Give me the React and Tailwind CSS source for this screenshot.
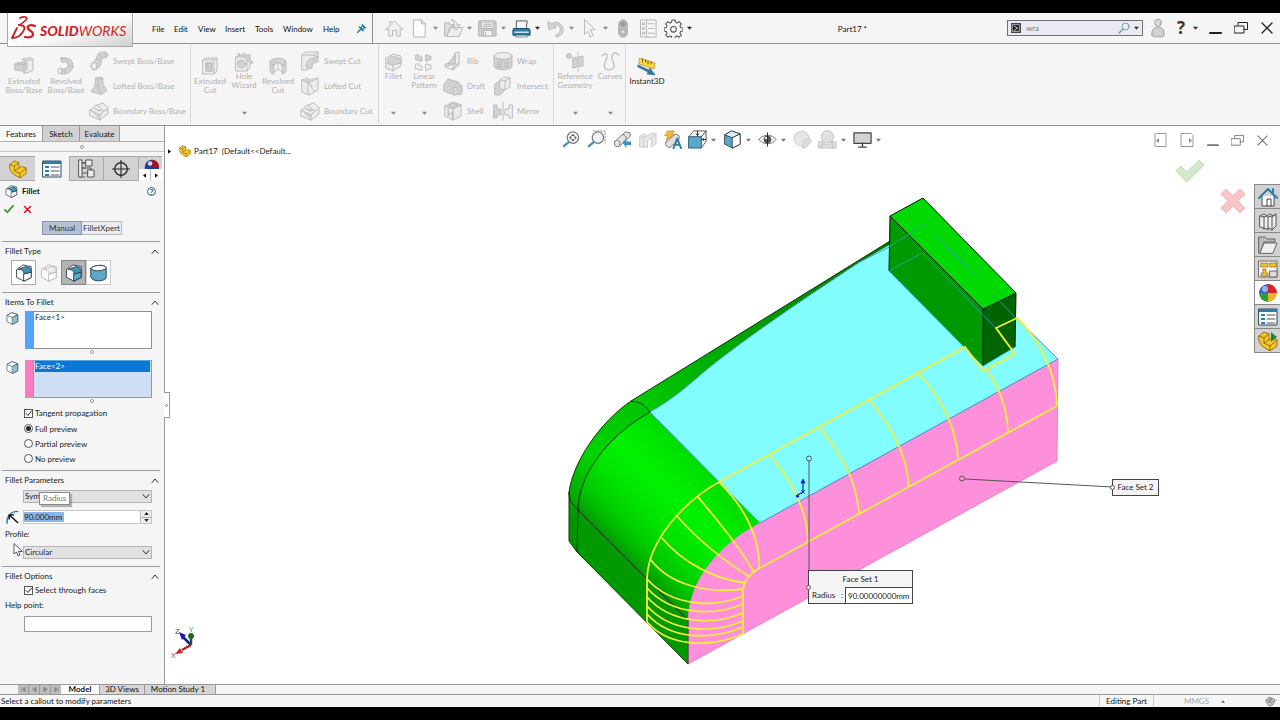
import { useState } from "react";
import clsx from "clsx";

function Svg({ box = "0 0 20 20", className = "size-5", children }) {
    return (
        <svg viewBox={box} className={clsx("shrink-0", className)} fill="none" strokeLinejoin="round" strokeLinecap="round" aria-hidden="true">
            {children}
        </svg>
    );
}

function Caret({ className = "text-[#777]" }) {
    return (
        <Svg box="0 0 6 4" className={clsx("h-1 w-[5px]", className)}>
            <path d="M0 .5h6L3 4z" fill="currentColor" />
        </Svg>
    );
}

/* ---------- ribbon icons (greyed out) ---------- */

const G = "#bdbdbd";
const L = "#ececec";
const D = "#d2d2d2";

const ribbonIcons = {
    extrude: (
        <g stroke={G}>
            <path d="M9 3l8-1.500 2 2v11l-8 3-2-1.500z" fill={L} />
            <path d="M9 3l2 1.500v13M11 4.500l8-1" />
            <path d="M1 8l3-1.500 9 .5v6l-3 2-9-1z" fill={D} />
            <path d="M1 8l9 .5v6.500M10 8.500L13 7" />
        </g>
    ),
    revolve: (
        <g stroke={G}>
            <path d="M5 2c8-2 13 4 12 9s-8 9-14 6l1-5c4 2 7 1 8-2s-2-5-6-4z" fill={D} />
            <path d="M5 2c4 1 6 2 7 6M17 11l-5-1M9 18l0-5" />
            <ellipse cx="4" cy="15" rx="2" ry="3" fill={L} />
        </g>
    ),
    sweep: (
        <g stroke={G}>
            <path d="M2 15c0-4 4-4 5-7s2-7 7-7c3 0 5 1 5 3s-2 3-4 3c-3 0-2 3-3 6s-4 6-7 6c-2 0-3-2-3-4z" fill={D} />
            <ellipse cx="5" cy="15" rx="3" ry="3.500" fill={L} />
            <path d="M16 1l1 5M9 3l4 3M7 8l5 2" />
        </g>
    ),
    loft: (
        <g stroke={G}>
            <path d="M7 2l5-1 2 1.500v6l4 6-6 4-10-3 4-6z" fill={D} />
            <path d="M7 2l2 1.500 5-1M9 3.500v6l3 9M6 9.500l3 0" />
        </g>
    ),
    boundary: (
        <g stroke={G}>
            <path d="M1 9c3-1 4-5 7-5s3-2 6-2l5 5v6l-8 6-10-4z" fill={L} />
            <path d="M1 9l10 5v5M11 14c2-1 2-3 4-4s3-1 4-3M8 4l4 4M5 7l5 3 4-1" fill={D} />
        </g>
    ),
    cutExtrude: (
        <g stroke={G}>
            <path d="M3 4l3-2h11v13l-3 3H3z" fill={L} />
            <path d="M3 4h11v14M14 4l3-2" />
            <path d="M6 7h6v8H6z" fill={D} strokeWidth="1.500" />
            <path d="M8 7v5h4" />
        </g>
    ),
    hole: (
        <g stroke={G}>
            <path d="M2 5l4-2h10v12l-3 4H2z" fill={L} />
            <path d="M2 5h11v14M13 5l3-2" />
            <circle cx="7.500" cy="12" r="4" fill={D} />
            <path d="M10 1l9 9-2 2-9-9z" fill={D} />
            <path d="M5 1l1 3M3 2l2 1" />
        </g>
    ),
    cutRevolve: (
        <g stroke={G}>
            <path d="M2 6c0-5 16-5 16 0v9c0 2-2 3-4 3V9l-4-3-4 3v9c-2 0-4-1-4-3z" fill={D} />
            <path d="M2 6c0 2 2 3 4 3M18 6c0 2-2 3-4 3M10 6v7l-4 3M10 13l4 3" />
        </g>
    ),
    cutSweep: (
        <g stroke={G}>
            <path d="M2 4l3-3h13v6l-2 2c-5 0-7 3-7 7l-2 3H2z" fill={L} />
            <path d="M2 4h13v5M15 4l3-3" />
            <path d="M6 16c0-6 3-9 9-9l3-2v6c-4 0-6 2-6 6l-2 1z" fill={D} />
        </g>
    ),
    cutLoft: (
        <g stroke={G}>
            <path d="M2 4l6-2 1 2 9-2v12l-9 5-7-3z" fill={L} />
            <path d="M2 4l6 3 10-5M8 7v11M8 7c5 1 3 7 6 8" fill={D} />
        </g>
    ),
    fillet: (
        <g stroke={G}>
            <path d="M2 6l7-4 8 2v10l-8 5-7-3z" fill={L} />
            <path d="M4 8c1-3 4-4 8-3l5 2v4l-8 2-5-1z" fill={D} />
            <path d="M9 13v6" />
        </g>
    ),
    pattern: (
        <g stroke={G}>
            <path d="M2 3h3v2h3v4H5v-1H2zM12 3h2v1h3v4h-3v1h-2z" fill={D} />
            <path d="M2 12h3v2h3v4H5v-1H2zM12 12h2v1h3v4h-3v1h-2z" />
        </g>
    ),
    rib: (
        <g stroke={G}>
            <path d="M12 2l4-1v13l-6 5-8-3 0-3 7-1z" fill={L} />
            <path d="M12 2v11l-9 2M12 4c-1 4-3 6-7 8l7 1zM10 19v-3l6-4" fill={D} />
        </g>
    ),
    draft: (
        <g stroke={G}>
            <path d="M1 8l4-5 10 3 4 4v8l-8 1-10-4z" fill={D} />
            <path d="M11 19l0-7 4-6M11 12l8-2" fill={L} />
        </g>
    ),
    shell: (
        <g stroke={G}>
            <path d="M2 5l8-4 8 3v11l-8 4-8-4z" fill={L} />
            <path d="M2 5l8 3 8-4M10 8v11M5 7v8l5-4v7M6 4l4-2 5 2-5 2z" fill={D} />
        </g>
    ),
    wrap: (
        <g stroke={G}>
            <ellipse cx="10" cy="5" rx="9" ry="3.500" fill={L} />
            <path d="M1 5v10c0 5 18 5 18 0V5c0 4.500-18 4.500-18 0z" fill={D} />
            <path d="M9 11H5v5h4M5 13.500h3M12 11v5l3-.5v-4.500" strokeWidth="1.500" />
        </g>
    ),
    intersect: (
        <g stroke={G}>
            <path d="M2 8l5-3h4v10l-4 4H2z" fill={D} />
            <path d="M7 4l4-3 6 1v9l-5 3-5-1z" fill={L} />
            <path d="M7 4l5 1v9M12 5l5-3" />
        </g>
    ),
    mirror: (
        <g stroke={G}>
            <path d="M1 4h3v4h4v6H4v3H1z" fill={D} />
            <path d="M19 4h-3v4h-4v6h4v3h3z" fill={L} />
            <path d="M10 1v18" />
        </g>
    ),
    reference: (
        <g stroke={G}>
            <circle cx="4" cy="4" r="2.500" fill={D} />
            <path d="M8 6l10-2v10L8 16z" fill={D} />
            <path d="M13 0v3M13 7v6M13 17v3" />
        </g>
    ),
    curves: <path d="M2 4c2-3 6-3 5 1S2 15 6 17s9 0 8-4-4-8-1-11 4 0 6 1" stroke={G} strokeWidth="1.300" />,
    instant: (
        <g>
            <path d="M3 2l15 5-1 6L2 8z" fill="#ffd93b" stroke="#a08020" strokeWidth=".6" />
            <path d="M5.500 3v3M8.500 4v2M11 5v3M14 6v2" stroke="#5c4a10" strokeWidth=".9" />
            <path d="M1 9l11 5 1-2 5 7-8-1 1-2-10-5z" fill="#2c7fa3" stroke="#1b5875" strokeWidth=".5" />
        </g>
    ),
};

function BigTool({ icon, label, width, drop, active }) {
    return (
        <button className={clsx("flex h-full flex-col items-center leading-[9px]", width, drop ? "pt-2" : "pt-3", active ? "text-[#222]" : "text-[#b0b0b0]")}>
            <Svg>{ribbonIcons[icon]}</Svg>
            <span className={clsx("whitespace-pre text-center", !drop && "pt-px")}>{label}</span>
            {drop && <Caret className="mt-auto mb-2 text-[#888]" />}
        </button>
    );
}

function ToolStack({ items }) {
    return (
        <div className="flex flex-col pt-1">
            {items.map(([icon, label]) => (
                <button key={label} className="flex h-[25px] items-center gap-1 whitespace-nowrap text-[#b0b0b0]">
                    <Svg>{ribbonIcons[icon]}</Svg>
                    {label}
                </button>
            ))}
        </div>
    );
}

function Ribbon() {
    return (
        <div className="flex h-[82px] shrink-0 border-b border-[#8f8f8f] bg-[#f5f5f5] pb-[2px]">
            <div className="flex w-[191px] border-r border-[#d8d8d8] pl-[3px]">
                <BigTool icon="extrude" label={"Extruded\nBoss/Base"} width="w-[42px]" />
                <BigTool icon="revolve" label={"Revolved\nBoss/Base"} width="w-[42px]" />
                <div className="pl-[2px]">
                    <ToolStack items={[["sweep", "Swept Boss/Base"], ["loft", "Lofted Boss/Base"], ["boundary", "Boundary Boss/Base"]]} />
                </div>
            </div>
            <div className="flex w-[188px] border-r border-[#d8d8d8] pl-[2px]">
                <BigTool icon="cutExtrude" label={"Extruded\nCut"} width="w-[34px]" />
                <BigTool icon="hole" label={"Hole\nWizard"} width="w-[34px]" drop />
                <BigTool icon="cutRevolve" label={"Revolved\nCut"} width="w-[34px]" />
                <div className="pl-[5px]">
                    <ToolStack items={[["cutSweep", "Swept Cut"], ["cutLoft", "Lofted Cut"], ["boundary", "Boundary Cut"]]} />
                </div>
            </div>
            <div className="flex w-[175px] border-r border-[#d8d8d8]">
                <BigTool icon="fillet" label="Fillet" width="w-[29px]" drop />
                <BigTool icon="pattern" label={"Linear\nPattern"} width="w-[32px]" drop />
                <div className="flex w-[53px] pl-[3px]">
                    <ToolStack items={[["rib", "Rib"], ["draft", "Draft"], ["shell", "Shell"]]} />
                </div>
                <ToolStack items={[["wrap", "Wrap"], ["intersect", "Intersect"], ["mirror", "Mirror"]]} />
            </div>
            <div className="flex w-[72px] border-r border-[#d8d8d8]">
                <BigTool icon="reference" label={"Reference\nGeometry"} width="w-[42px]" drop />
                <BigTool icon="curves" label="Curves" width="w-[28px]" drop />
            </div>
            <BigTool icon="instant" label="Instant3D" width="w-[42px]" active />
        </div>
    );
}

/* ---------- title bar ---------- */

const quickIcons = {
    home: <path d="M1 11l9-9 9 9h-3v7h-4v-6H8v6H4v-7zM5 5V3h2" stroke="#b5b5b5" fill="#f0f0f0" />,
    file: <path d="M4 1h8l4 4v14H4zM12 1v4h4" stroke="#b5b5b5" fill="#fbfbfb" />,
    open: (
        <g stroke="#b5b5b5">
            <path d="M1 4h5l1 2h8v3H6l-3 9H1z" fill="#ddd" />
            <path d="M3 18l4-9h13l-4 9zM8 1c4 0 6 3 6 6l3-1-4 6-5-4 3-.5C11 5 10 3 8 1z" fill="#eee" />
        </g>
    ),
    save: (
        <g stroke="#b0b0b0">
            <path d="M1 2h17l1 1v15H1z" fill="#cfcfcf" />
            <path d="M4 2h12v8H4zM6 12h9v6H6z" fill="#f2f2f2" />
            <path d="M6 4h8M6 6h8M6 8h8M8 14v3" />
        </g>
    ),
    print: (
        <g>
            <path d="M5 2h11l-1 8H5z" fill="#f3f5f7" stroke="#555" />
            <path d="M2 10h16l1 2v5H1v-5z" fill="#2b7ea6" stroke="#174a63" />
            <path d="M3 14h14" stroke="#bfe4f5" strokeWidth="1.500" />
            <path d="M4 17h12v2H4z" fill="#e8eef0" stroke="#4d6a77" strokeWidth=".7" />
        </g>
    ),
    undo: <path d="M2 3l1 8 8-2-3-2c4-2 7 0 7 4s-3 5-5 6l1 2c4-1 8-4 7-9S11 1 6 5z" fill="#d5d5d5" stroke="#b5b5b5" />,
    pointer: <path d="M5 1l11 10-5 .5 3 6-3 1.500-3-6-3 3z" fill="#f3f3f3" stroke="#b5b5b5" />,
    traffic: (
        <g stroke="#a5a5a5">
            <rect x="5" y="1" width="9" height="18" rx="4.500" fill="#bbb" />
            <circle cx="9.500" cy="5.500" r="2.500" fill="#999" />
            <circle cx="9.500" cy="13.500" r="2.500" fill="#ddd" />
        </g>
    ),
    list: (
        <g stroke="#b5b5b5">
            <path d="M2 1h16v18H2zM8 1v18" fill="#f6f6f6" />
            <path d="M4 4h2v2H4zM4 9h2v2H4zM4 14h2v2H4zM10 5h6M10 10h6M10 15h6" />
        </g>
    ),
    gear: (
        <g stroke="#555" strokeWidth="1.100">
            <path d="M8.400 1h3.200l.5 2.500 1.700.7 2.100-1.400 2.300 2.300-1.400 2.100.7 1.700 2.500.5v3.200l-2.500.5-.7 1.700 1.400 2.100-2.300 2.300-2.100-1.400-1.700.7-.5 2.500H8.400l-.5-2.500-1.700-.7-2.100 1.400-2.300-2.300 1.400-2.100-.7-1.700L0 12.600V9.400l2.500-.5.7-1.700-1.400-2.100 2.300-2.300 2.100 1.400 1.700-.7z" fill="#f8f8f8" />
            <circle cx="10" cy="10.800" r="3" />
        </g>
    ),
};

const quickTools = [
    ["home", "Home", 0],
    ["file", "New", 1],
    ["open", "Open", 1],
    ["save", "Save", 1],
    ["print", "Print", 2],
    ["undo", "Undo", 1],
    ["pointer", "Select", 1],
    ["traffic", "Rebuild", 0],
    ["list", "File Properties", 0],
    ["gear", "Options", 2],
];

function Logo() {
    return (
        <div className="z-10 -mb-1 ml-[7px] flex h-[34px] w-[126px] shrink-0 items-center self-start border border-t-0 border-[#a8a8a8] bg-linear-to-br from-white via-white to-[#cfcfcf] pl-[3px]">
            <Svg box="0 0 26 26" className="-mt-[5px] size-[26px]">
                <path d="M9 4C13 2 18 3 15 6C13 8 11 10 8 11" stroke="#cf1f25" strokeWidth="1.700" />
                <path d="M8 11C14 11 15 14 11 19C9 22 5 24 1 24L6 14" stroke="#cf1f25" strokeWidth="1.900" />
                <path d="M24 12C19 10 16 12 17 14.500C18 17 22 17 22 20C22 23 18 24 14 23" stroke="#cf1f25" strokeWidth="2.300" />
            </Svg>
            <span className="ml-[3px] pt-[3px] font-[Lato] text-[14px] italic leading-4 text-[#cf1f25]">
                <b className="font-black">SOLID</b>WORKS
            </span>
        </div>
    );
}

function WindowButtons({ className, size, gap }) {
    return (
        <div className={clsx("flex items-center", gap, className)}>
            <button aria-label="Minimize"><Svg box="0 0 14 14" className={size}><path d="M2 12h11" stroke="currentColor" strokeWidth="2" /></Svg></button>
            <button aria-label="Restore">
                <Svg box="0 0 14 14" className={size}>
                    <path d="M4 4V1.500h9.500v7H10" stroke="currentColor" />
                    <path d="M.5 5h9.500v7H.5z" stroke="currentColor" />
                </Svg>
            </button>
            <button aria-label="Close"><Svg box="0 0 14 14" className={size}><path d="M2 2l10 10M12 2L2 12" stroke="currentColor" strokeWidth="1.300" /></Svg></button>
        </div>
    );
}

function TitleBar() {
    return (
        <header className="flex h-[31px] shrink-0 items-center border-b border-[#8f8f8f] bg-[#f5f5f5]">
            <Logo />
            <nav className="ml-[19px] flex items-center pt-[2px] text-[#111]">
                {[["File", "w-[22px]"], ["Edit", "w-6"], ["View", "w-[27px]"], ["Insert", "w-[30px]"], ["Tools", "w-[28px]"], ["Window", "w-[40px]"], ["Help", "w-[34px]"]].map(([m, w]) => (
                    <button key={m} className={clsx("text-left", w)}>{m}</button>
                ))}
            </nav>
            <button aria-label="Pin menu" className="flex h-full w-4 items-center justify-start border-r border-[#8f8f8f]">
                <Svg box="0 0 12 12" className="size-[9px]"><path d="M1 11l4-4M3 4l5 5M5 5l3-3 2 3-3 3zM7 1l4 4" stroke="#2b7ea6" strokeWidth="2" /></Svg>
            </button>
            <div className="ml-3 flex items-center">
                {quickTools.map(([icon, name, drop]) => (
                    <button key={name} aria-label={name} className={clsx("flex items-center gap-1", drop ? "w-[34px]" : "w-[25px]")}>
                        <Svg className="size-[19px]">{quickIcons[icon]}</Svg>
                        {drop > 0 && <Caret className={drop === 2 ? "text-[#222]" : "text-[#888]"} />}
                    </button>
                ))}
            </div>
            <div className="flex-1 pt-[2px] text-center">Part17 *</div>
            <label className="flex h-4 w-[136px] items-center border border-[#6d7078] bg-[#e9ebf1] px-[3px]">
                <Svg box="0 0 12 12" className="size-[10px]">
                    <path d="M0 0h12v12H0z" fill="#444" />
                    <path d="M2 2h8v8H2z" fill="#111" stroke="#ccc" />
                    <path d="M4 4l4 2-4 3" stroke="#fff" />
                </Svg>
                <input aria-label="Search commands" defaultValue="wra" className="ml-[5px] min-w-0 flex-1 bg-transparent text-[#777] outline-none" />
                <Svg box="0 0 12 12" className="size-3"><circle cx="7.500" cy="4.500" r="3.500" stroke="#7a97b5" /><path d="M5 7l-4 4" stroke="#7a97b5" strokeWidth="1.500" /></Svg>
                <Caret className="ml-1 text-[#333]" />
            </label>
            <button aria-label="Account" className="ml-2">
                <Svg box="0 0 16 22" className="h-5 w-[14px]">
                    <circle cx="8" cy="5" r="4" fill="#d8d8d8" stroke="#999" />
                    <path d="M1 18c0-5 2-8 7-8s7 3 7 8c0 2-1 3-2 3H3c-1 0-2-1-2-3z" fill="#d0d0d0" stroke="#999" />
                </Svg>
            </button>
            <button aria-label="Help" className="ml-3 flex items-center gap-2 font-['Open_Sans'] text-[17px] leading-5 font-bold text-[#333]">?<Caret className="text-[#333]" /></button>
            <WindowButtons className="mr-[6px] ml-[10px] text-[#222]" size="size-[14px]" gap="gap-3" />
        </header>
    );
}

/* ---------- property manager ---------- */

function Cube({ top = "#fff", left = "#fff", right = "#8cc3da", className }) {
    return (
        <Svg className={className}>
            <path d="M2 5l7-4 9 3v11l-8 4-8-4z" fill={left} stroke="#3b4a52" />
            <path d="M10 8l8-4v11l-8 4z" fill={right} stroke="#3b4a52" />
            <path d="M2 5l7-4 9 3-8 4z" fill={top} stroke="#3b4a52" />
        </Svg>
    );
}

// cube with its front top edge rounded off
function FilletCube({ front = "#fff", band = "#3f93b8", line = "#2c3e48", className }) {
    return (
        <Svg className={className}>
            <path d="M2 6l7-5 9 2v12l-8 4-8-4z" fill="#fff" stroke={line} />
            <path d="M10 11l8-2v6l-8 4z" fill={front} stroke={line} />
            <path d="M4 6c4 0 6 2 6 5l8-2c0-4-2-6-6-6z" fill={band} stroke={line} />
        </Svg>
    );
}

function PartIcon({ className, play }) {
    return (
        <Svg className={className}>
            <path d="M1 5l5-4 5 2v6l3-2 5 2v6l-7 5-8-5-3-5z" fill="#f5c731" stroke="#94700c" />
            <path d="M1 5l5 2 5-4M6 7v5l6 3 7-6M12 15v5M6 12l5-3" stroke="#94700c" />
            {play && <path d="M13 1l6 5-6 5z" fill="#1f8a2c" />}
        </Svg>
    );
}

function ListIcon({ className }) {
    return (
        <Svg className={className}>
            <path d="M1 2h18v16H1z" fill="#fff" stroke="#234c60" />
            <path d="M1 2h18v3H1z" fill="#2b7ea6" />
            <path d="M3 7h4v2H3zM3 11h4v2H3zM3 15h4v2H3z" fill="#2b7ea6" />
            <path d="M9 8h8M9 12h8M9 16h8" stroke="#555" />
        </Svg>
    );
}

function Chevron({ up, className }) {
    return (
        <Svg box="0 0 8 5" className={clsx("h-[5px] w-2", className)}>
            <path d={up ? "M1 4.500L4 1l3 3.500" : "M1 .5L4 4 7 .5"} stroke="#333" />
        </Svg>
    );
}

function Section({ title, children }) {
    return (
        <section className="mr-1 ml-[2px] border-t border-[#9b9b9b] pr-2 pl-[3px]">
            <button className="flex h-[18px] w-full items-center text-[#222]">
                {title}
                <Chevron up className="-mr-[7px] ml-auto" />
            </button>
            {children}
        </section>
    );
}

function SelectionList({ label, value, bar, selected }) {
    return (
        <div className="flex">
            <Cube className="mt-px mr-[6px] ml-px size-[13px]" />
            <div className={clsx("w-2 shrink-0", bar)} />
            <ul role="listbox" aria-label={label} className={clsx("h-[38px] flex-1 border px-px", selected ? "border-[#5aa9e6] bg-[#cfe0f6]" : "border-[#8f8f9a] bg-white")}>
                <li role="option" aria-selected={!!selected} className={clsx("h-[11px] leading-[11px]", selected ? "bg-[#0a78d7] text-white" : "text-[#222]")}>{value}</li>
            </ul>
        </div>
    );
}

function Handle() {
    return <div className="mx-auto size-1 shrink-0 rounded-full border border-[#999] bg-white" />;
}

function Check({ children }) {
    return (
        <label className="flex items-center gap-[2px] text-[#222]">
            <span className="grid size-[9px] shrink-0 place-items-center">
                <input type="checkbox" defaultChecked className="peer col-start-1 row-start-1 size-[9px] appearance-none border border-[#555] bg-white" />
                <Svg box="0 0 9 9" className="pointer-events-none invisible col-start-1 row-start-1 size-[9px] peer-checked:visible"><path d="M2 4.500L4 6.500 7.500 2" stroke="#222" /></Svg>
            </span>
            {children}
        </label>
    );
}

function Combo({ label, options }) {
    return (
        <div className="ml-[18px] grid h-[13px] items-center">
            <select aria-label={label} className="col-start-1 row-start-1 h-[13px] appearance-none border border-[#b5b5b5] bg-[#e1e1e1] pl-px leading-[11px] text-[#222]">
                {options.map((o) => <option key={o}>{o}</option>)}
            </select>
            <Chevron className="pointer-events-none col-start-1 row-start-1 mr-[2px] justify-self-end" />
        </div>
    );
}

function FilletPanel() {
    const [preview, setPreview] = useState("Full preview");

    return (
        <aside className="relative flex w-[165px] shrink-0 flex-col border-r border-[#9b9b9b] bg-[#f5f5f5]">
            <div className="flex h-4 border-b border-[#b0b0b0]">
                <button className="w-[42px] bg-[#f8f8f8]">Features</button>
                <button className="w-[38px] border-x border-[#999] bg-[#d2d2d2]">Sketch</button>
                <button className="w-10 border-r border-[#999] bg-[#d2d2d2]">Evaluate</button>
            </div>
            <div className="flex h-[10px] items-center border-b border-[#c5c5c5]"><Handle /></div>

            <div className="mt-1 mr-[2px] flex h-[25px]">
                <button aria-label="Feature tree" className="grid w-[35px] place-items-center border-y border-[#aaa] bg-[#d2d2d2]"><PartIcon className="size-[18px]" /></button>
                <button aria-label="Properties" className="grid w-[34px] place-items-center"><ListIcon className="size-5" /></button>
                <button aria-label="Configurations" className="grid w-[35px] place-items-center border border-[#aaa] bg-[#d2d2d2]">
                    <Svg>
                        <path d="M3 1v17h5M3 9h5M3 4h5" stroke="#666" />
                        <path d="M2 1h3v17H2zM9 1h6v6H9zM11 11h6v7h-6z" fill="#eee" stroke="#555" />
                        <path d="M5 4h4M5 9h9v2M5 14h6" stroke="#555" />
                    </Svg>
                </button>
                <button aria-label="Dimensions" className="grid w-[35px] place-items-center border-y border-r border-[#aaa] bg-[#d2d2d2]">
                    <Svg className="size-[18px]"><circle cx="10" cy="10" r="7" stroke="#222" strokeWidth="1.400" /><path d="M10 0v20M0 10h20" stroke="#222" strokeWidth="1.200" /></Svg>
                </button>
                <div className="flex flex-1 flex-col border-t border-[#aaa] bg-[#d2d2d2]">
                    <button aria-label="Display" className="grid h-3 items-start justify-items-center overflow-hidden pt-px">
                        <Svg className="size-[18px]"><circle cx="11" cy="10" r="8" fill="#22409a" /><path d="M11 2a8 8 0 0 1 8 8h-8z" fill="#a31621" /><circle cx="9" cy="6" r="2.500" fill="#d5e2ff" /></Svg>
                    </button>
                    <div className="grid flex-1 grid-cols-2 divide-x divide-[#bbb] bg-white text-[#111]">
                        <button aria-label="Previous tab" className="grid place-items-center"><Svg box="0 0 4 6" className="h-[5px] w-[3px]"><path d="M4 0v6L0 3z" fill="currentColor" /></Svg></button>
                        <button aria-label="Next tab" className="grid place-items-center"><Svg box="0 0 4 6" className="h-[5px] w-[3px]"><path d="M0 0v6l4-3z" fill="currentColor" /></Svg></button>
                    </div>
                </div>
            </div>

            <div className="flex h-5 items-center pr-2 pl-[5px]">
                <FilletCube className="size-[13px]" />
                <h1 className="ml-1 font-bold">Fillet</h1>
                <button aria-label="Help" className="ml-auto grid size-[9px] place-items-center rounded-full border border-[#38617a] leading-[8px] font-bold text-[#205a80]">?</button>
            </div>
            <div className="flex h-4 items-center gap-[9px] pl-1">
                <button aria-label="OK"><Svg box="0 0 12 12" className="size-[10px]"><path d="M1 7l3 3 7-8" stroke="#3a9a1f" strokeWidth="2" /></Svg></button>
                <button aria-label="Cancel"><Svg box="0 0 12 12" className="size-[9px]"><path d="M2 2l8 8M10 2l-8 8" stroke="#d2161e" strokeWidth="2" /></Svg></button>
            </div>
            <div className="mx-auto mt-1 mb-[6px] flex h-[14px] text-[#333]">
                <button className="w-10 border border-[#8894a5] bg-[#b4c1d4]">Manual</button>
                <button className="w-10 border border-l-0 border-[#b5b9c0] bg-[#ebedf1]">FilletXpert</button>
            </div>

            <Section title="Fillet Type">
                <div className="mb-[7px] ml-[6px] flex h-[25px]">
                    <button aria-label="Constant size" className="grid w-[25px] place-items-center border border-[#aaa] bg-white"><FilletCube className="size-[18px]" /></button>
                    <button aria-label="Variable size" className="grid w-[25px] place-items-center"><FilletCube band="#eee" line="#b5b5b5" className="size-[18px]" /></button>
                    <button aria-label="Face fillet" className="grid w-[25px] place-items-center border border-[#888] bg-[#b3b3b3]"><FilletCube front="#5ba7c8" className="size-[18px]" /></button>
                    <button aria-label="Full round" className="grid w-[25px] place-items-center border border-[#ccc] bg-white">
                        <Svg className="size-[18px]"><path d="M1 5c2-4 15-5 17-1v11c-2 5-15 5-17 0z" fill="#5ba7c8" stroke="#223c48" /><path d="M1 5c2-4 15-5 17-1-1 4-15 5-17 1z" fill="#fff" stroke="#223c48" /></Svg>
                    </button>
                </div>
            </Section>

            <Section title="Items To Fillet">
                <SelectionList label="Face set 1" value="Face<1>" bar="bg-[#55a4fb]" />
                <div className="h-[11px] pt-px pl-[26px]"><Handle /></div>
                <SelectionList label="Face set 2" value="Face<2>" bar="bg-[#fb7cc0]" selected />
                <div className="h-[7px] pt-px pl-[26px]"><Handle /></div>
                <div className="mb-1 ml-[19px] flex flex-col">
                    <div className="flex h-4"><Check>Tangent propagation</Check></div>
                    {["Full preview", "Partial preview", "No preview"].map((p) => (
                        <label key={p} className="flex h-[15px] items-center gap-[2px] text-[#222]">
                            <input
                                type="radio"
                                name="preview"
                                checked={preview === p}
                                onChange={() => setPreview(p)}
                                className="grid size-[9px] shrink-0 appearance-none place-items-center rounded-full border border-[#555] bg-white checked:after:size-[5px] checked:after:rounded-full checked:after:bg-[#222] checked:after:content-['']"
                            />
                            {p}
                        </label>
                    ))}
                </div>
            </Section>

            <Section title="Fillet Parameters">
                <div className="relative mt-px">
                    <Combo label="Symmetry" options={["Symmetric", "Asymmetric"]} />
                    <div role="tooltip" className="absolute top-[2px] left-[34px] border border-[#888] bg-white px-[3px] leading-[11px] text-[#777] shadow-[2px_2px_1px_#8889]">Radius</div>
                </div>
                <div className="mt-[7px] flex h-[14px] items-center">
                    <Svg className="mr-1 size-[14px]"><path d="M3 19C2 9 8 2 18 2" stroke="#2b7ea6" strokeWidth="2" /><path d="M18 18L7 8M6 13V7h6" stroke="#111" strokeWidth="2" /></Svg>
                    <div className="flex h-full flex-1 items-center border border-[#c5c5c5] bg-white">
                        <input aria-label="Radius" defaultValue="90.000mm" className="w-10 bg-[#86b7e6] leading-[10px] text-[#222] outline-none" />
                        <div className="ml-auto flex h-full w-[11px] flex-col divide-y divide-[#aaa] border-l border-[#bbb] bg-[#eee] text-[#222]">
                            <button aria-label="Increase" className="grid flex-1 place-items-center"><Svg box="0 0 6 4" className="h-[3px] w-[5px]"><path d="M0 4h6L3 0z" fill="currentColor" /></Svg></button>
                            <button aria-label="Decrease" className="grid flex-1 place-items-center"><Svg box="0 0 6 4" className="h-[3px] w-[5px]"><path d="M0 0h6L3 4z" fill="currentColor" /></Svg></button>
                        </div>
                    </div>
                </div>
                <div className="mb-[2px] flex h-5 items-center text-[#222]">Profile:</div>
                <div className="relative mb-[7px]">
                    <Combo label="Profile" options={["Circular", "Conic Rho"]} />
                    <Svg box="0 0 10 14" className="absolute -top-[3px] left-2 h-[14px] w-[10px]"><path d="M1 1v10l2.500-2L5 13l2-1-1.500-3.500H9z" fill="#fff" stroke="#333" strokeWidth=".8" /></Svg>
                </div>
            </Section>

            <Section title="Fillet Options">
                <div className="ml-[19px] flex h-[10px]"><Check>Select through faces</Check></div>
                <label className="flex flex-col text-[#222]">
                    <span className="flex h-5 items-center">Help point:</span>
                    <input className="mt-px ml-[19px] h-4 border border-[#9b9ba3] bg-white px-1 outline-none" />
                </label>
            </Section>

            <button aria-label="Collapse panel" className="absolute top-[266px] -right-[6px] z-10 grid h-[26px] w-[6px] place-items-center border border-l-0 border-[#999] bg-white"><span className="size-[3px] rounded-full border border-[#888]" /></button>
        </aside>
    );
}

/* ---------- graphics area ---------- */

const seams = [
    "M769 454C789 477 807 507 808 541",
    "M819 427C839 450 857 480 859 514",
    "M869 400C889 423 907 453 909 487",
    "M918 373C940 396 956 426 958 458",
    "M987 370C1000 389 1007 408 1008 431",
    "M1017 318C1040 340 1056 372 1057 406",
    "M719 482C743 505 761 538 759 569",
    "M698 497C715 517 740 548 754 572",
    "M677 516C698 540 726 562 750 577",
    "M662 538C682 562 715 580 746 583",
    "M651 560C670 585 708 594 743 589",
];

// [left y, right y] of the ribs that wrap round the vertical corner
const wraps = [[579, 596], [588, 604], [597, 613], [606, 621], [614, 627], [622, 634]];

// edge between the top face and the rounded back edge
const topEdge = "M650 412C672 400 690 384 705 371C750 335 802 300 860 262";

function Model() {
    return (
        <svg viewBox="165 126 1115 558" className="h-[558px] w-[1115px]" fill="none" role="img" aria-label="Part with fillet preview">
            <defs>
                <linearGradient id="side" gradientUnits="userSpaceOnUse" x1="578" y1="510" x2="663" y2="425">
                    <stop offset="0" stopColor="#009a00" />
                    <stop offset=".15" stopColor="#00c400" />
                    <stop offset=".4" stopColor="#00e400" />
                    <stop offset=".65" stopColor="#00f200" />
                    <stop offset="1" stopColor="#00dc00" />
                </linearGradient>
                <linearGradient id="back" gradientUnits="userSpaceOnUse" x1="569" y1="520" x2="640" y2="410">
                    <stop offset="0" stopColor="#009400" />
                    <stop offset=".5" stopColor="#00d400" />
                    <stop offset="1" stopColor="#00c400" />
                </linearGradient>
                <linearGradient id="rail" gradientUnits="userSpaceOnUse" x1="640" y1="405" x2="889" y2="244">
                    <stop offset="0" stopColor="#00cc00" />
                    <stop offset=".25" stopColor="#00b000" />
                    <stop offset="1" stopColor="#007800" />
                </linearGradient>
            </defs>

            <path d="M569 541V492C573 462 600 422 631 401C640 402 645 404 650 412L578 510L577 552z" fill="url(#back)" />
            <path d="M578 510C578 478 604 438 650 412L760 523L743 533C716 552 690 580 688 620z" fill="url(#side)" />
            <path d="M578 510L688 620V664L577 552z" fill="#009a00" />
            <path d={`${topEdge}L890 248V241L631 401C640 402 645 404 650 412z`} fill="url(#rail)" />
            <path d={`${topEdge}L925 224L1058 359L760 523z`} fill="#82fdff" />
            <path d="M760 523L1058 359L1057 461L688 664V620C690 580 716 552 743 533z" fill="#fd8fdb" stroke="#e87fc6" />
            <path d={`${topEdge}L889 247M650 412L760 523L1058 359L1016 318`} stroke="#4f97d6" />
            <path d="M631 401C600 422 573 462 569 492V541L577 552L688 664V620L578 510C571 503 569 500 569 492M631 401L890 241M631 401C640 402 645 404 650 412C604 438 578 478 578 510L577 552" stroke="#052505" strokeWidth=".9" />

            <path d="M890 216L923 198L1016 293L983 309z" fill="#00d900" />
            <path d="M890 216L983 309V366L889 271z" fill="#009900" />
            <path d="M983 309L1016 293L1015 347L983 366z" fill="#006500" />
            <path d="M890 216L923 198L1016 293L1015 347M890 216L983 309L1016 293M983 309V366M890 216L889 271" stroke="#021802" />
            <path d="M889 247L925 224L1016 318M889 271L922 253L996 328M889 271L983 366L1015 347" stroke="#2f9db8" strokeWidth=".9" />

            <g stroke="#f3ee3c" strokeWidth="1.800">
                <path d="M719 482L965 347L983 371L1015 354L996 328L1017 318" />
                <path d="M1057 406L760 568C749 574 743 582 743 592V634" />
                <path d="M719 482C685 501 648 540 647 579V622" />
                {seams.map((d) => <path key={d} d={d} />)}
                {wraps.map(([l, r]) => <path key={l} d={`M647 ${l}C672 ${l + 28} 715 ${r + 12} 743 ${r}`} />)}
            </g>

            <g stroke="#0b22c8" strokeWidth="1.200">
                <path d="M803 492V482M803 492L796 496" />
                <path d="M801 483l2-4 2 4zM796 497l2-2 1 2zM801 490l4 4M805 490l-4 4" fill="#0b22c8" strokeWidth=".8" />
            </g>

            <g stroke="#555">
                <path d="M809 461V587M965 479L1113 487" />
                <circle cx="809" cy="458.500" r="2.500" />
                <circle cx="962" cy="478.500" r="2.500" />
            </g>
            <g strokeWidth="2.500">
                <path d="M191 645L183 637" stroke="#1a1a9c" /><path d="M179 632l7 3-4 5z" fill="#1a1a9c" />
                <path d="M191 645L182 650" stroke="#b51c22" /><path d="M175 654l5-6 3 5z" fill="#c3262c" />
                <path d="M191 645V636" stroke="#1c5c26" /><circle cx="191" cy="636" r="3" fill="#1c6a2a" />
            </g>
            <g className="font-['Open_Sans'] text-[8px]">
                <text x="175" y="634" fill="#3b3bb0">Z</text>
                <text x="189" y="632" fill="#3b8a3b">Y</text>
                <text x="171" y="658" fill="#b03b3b">X</text>
            </g>
        </svg>
    );
}

function Magnifier({ area }) {
    return (
        <Svg>
            {area && <path d="M7 1h12v13" stroke="#999" strokeDasharray="2 1.500" />}
            <path d="M8 12l-6 5" stroke="#3f93b8" strokeWidth="2.500" />
            <circle cx="11.500" cy="8" r="6" fill="#f1f5f8" stroke="#777" strokeWidth="1.300" />
            {!area && <path d="M10.500 5.500l1-1 1 1zM10.500 10.500l1 1 1-1zM9 7l-1 1 1 1zM14 7l1 1-1 1z" stroke="#333" strokeWidth=".8" />}
        </Svg>
    );
}

const viewTools = [
    ["Zoom to Fit", "w-[25px]", false, <Magnifier />],
    ["Zoom to Area", "w-[26px]", false, <Magnifier area />],
    ["Previous View", "w-[25px]", false, (
        <Svg>
            <path d="M2 12L13 2l5 1v4L7 17c-4 2-7-1-5-5z" fill="#e4e4e4" stroke="#777" />
            <path d="M5 11c2 0 3 2 2 5M11 5c2 0 3 2 3 4" stroke="#777" />
            <path d="M10 13l4-4v3h5v4h-5v3z" fill="#3f93b8" />
        </Svg>
    )],
    ["Section View", "w-[25px]", false, (
        <Svg><path d="M2 7l4-3 4 2 4-3 5 1v10l-5 4V8l-4 3v7H2z" fill="#e8e8e8" stroke="#ccc" /><path d="M2 7l4 1v10M6 8l4-2M14 8l5-4" stroke="#ccc" /></Svg>
    )],
    ["Dynamic Annotation Views", "w-[25px]", false, (
        <Svg>
            <path d="M5 1h7L9 5h3L3 11l2-5H2z" fill="#f7b733" stroke="#b67812" strokeWidth=".6" />
            <path d="M3 13L13 4l4 2v4l-9 8c-3 1-6-1-5-5z" fill="#dedede" stroke="#777" />
            <path d="M11 19l4-10 4 10M12.500 15.500h5" stroke="#2b7ea6" strokeWidth="2" />
        </Svg>
    )],
    ["View Orientation", "w-[35px]", true, (
        <Svg>
            <path d="M1 7l5-6h13v11l-5 7" fill="#fff" stroke="#555" />
            <path d="M1 7h13v12H1z" fill="#5ba7c8" stroke="#2b5e78" />
            <path d="M14 7l5-6M10 1v5M8.500 4L10 6l1.500-2M19 10h-4M16.500 8.500L15 10l1.500 1.500" stroke="#333" />
        </Svg>
    )],
    ["Display Style", "w-[35px]", true, <Cube left="#5ba7c8" top="#d9edf5" right="#fff" className="size-5" />],
    ["Hide/Show Items", "w-[35px]", true, (
        <Svg><path d="M1 10c4-6 14-6 18 0-4 6-14 6-18 0z" fill="#f2f2f2" stroke="#777" /><circle cx="10" cy="10" r="4" fill="#555" /><path d="M10 3v14" stroke="#222" /><circle cx="8.500" cy="8.500" r="1.200" fill="#fff" /></Svg>
    )],
    ["Edit Appearance", "w-[25px]", false, (
        <Svg><circle cx="9" cy="9" r="8" fill="#e6e6e6" stroke="#ccc" /><path d="M12 11l5-3 2 4-5 6-4 1z" fill="#ddd" stroke="#c5c5c5" /></Svg>
    )],
    ["Apply Scene", "w-[35px]", true, (
        <Svg><circle cx="10" cy="7" r="6.500" fill="#e0e0e0" stroke="#c5c5c5" /><path d="M1 12h5l1 3h6l1-3h5v7H1z" fill="#ddd" stroke="#c5c5c5" /><path d="M4 19l1-7M15 12l1 7" stroke="#c5c5c5" /></Svg>
    )],
    ["View Settings", "w-[30px]", true, (
        <Svg><path d="M1 3h18v11H1z" fill="#cfd3d6" stroke="#444" strokeWidth="1.300" /><path d="M10 14v4M6 18h8" stroke="#444" strokeWidth="1.500" /></Svg>
    )],
];

const taskTabs = [
    ["Resources", <Svg><path d="M4 9v10h12V9" fill="#fff" stroke="#444" /><path d="M1 11l9-9 9 9M15 6V2" stroke="#2b7ea6" strokeWidth="2" /><path d="M9 19v-7h4v7" stroke="#444" /></Svg>],
    ["Design Library", <Svg><path d="M2 5l4-2 3 2 3-2 3 2 3-2v12l-4 4-3-2-3 1-3-1-3-1z" fill="#eee" stroke="#555" /><path d="M2 5l4 1v12M6 6l3-1M10 6v13M10 6l4-1M14 6v13M14 6l4-3" stroke="#555" /></Svg>],
    ["File Explorer", <Svg><path d="M1 2h6l2 2h8v3H6L2 18H1z" fill="#bbb" stroke="#666" /><path d="M2 18L6 8h13l-4 10z" fill="#f0f0f0" stroke="#666" /></Svg>],
    ["View Palette", <Svg><path d="M1 2h18v16H1z" fill="#fff" stroke="#666" /><path d="M3 4h7v4H3zM12 4h6v4h-6zM5 10h3v4h2v3H3v-3h2z" fill="#f2c22e" stroke="#8a6a0e" strokeWidth=".7" /><path d="M12 12h7v6h-7z" fill="#ddd" stroke="#666" /></Svg>],
    ["Appearances", <Svg><path d="M10 10V1a9 9 0 0 0-9 9z" fill="#2c66c9" /><path d="M10 10h9a9 9 0 0 0-9-9z" fill="#d5232b" /><path d="M10 10v9a9 9 0 0 0 9-9z" fill="#e7b52a" /><path d="M10 10H1a9 9 0 0 0 9 9z" fill="#2f9a3a" /><circle cx="7" cy="6" r="3" fill="#fff" opacity=".5" /></Svg>],
    ["Custom Properties", <ListIcon className="size-5" />],
    ["Forum", <PartIcon play className="size-5" />],
];

function GraphicsArea() {
    return (
        <main className="relative min-w-0 flex-1 overflow-hidden bg-white">
            <div className="absolute inset-0"><Model /></div>

            <div className="absolute top-[19px] left-[3px] flex items-center text-[#222]">
                <Svg box="0 0 4 6" className="h-[5px] w-[3px]"><path d="M0 0v6l4-3z" fill="#111" /></Svg>
                <PartIcon className="mr-[3px] ml-2 size-3" />
                Part17 &nbsp;(Default&lt;&lt;Default...
            </div>

            <div className="absolute inset-x-0 top-1 flex justify-center">
                {viewTools.map(([name, width, drop, icon]) => (
                    <button key={name} aria-label={name} className={clsx("flex items-center gap-1 [&>svg:first-child]:size-[19px]", width)}>
                        {icon}
                        {drop && <Caret />}
                    </button>
                ))}
            </div>

            <div className="absolute top-[7px] right-[11px] flex items-center gap-3 text-[#777]">
                <button aria-label="Previous pane"><Svg box="0 0 14 14" className="size-[14px]"><path d="M1 0v13.500h11V.5H3" stroke="#999" /><path d="M5 5v5L2 7.500z" fill="#888" /></Svg></button>
                <button aria-label="Next pane"><Svg box="0 0 14 14" className="size-[14px]"><path d="M11 .5H1v13h12V2" stroke="#999" /><path d="M9 5v5l3-2.500z" fill="#888" /></Svg></button>
                <WindowButtons size="size-[13px]" gap="gap-3" />
            </div>

            <button aria-label="Accept" className="absolute top-8 right-[75px]">
                <Svg box="0 0 30 26" className="h-[26px] w-[30px]"><path d="M1 13l5-5 6 6L24 2l5 5-17 17z" fill="#d3e8ca" stroke="#c3ddb9" /></Svg>
            </button>
            <button aria-label="Reject" className="absolute top-[62px] right-[34px]">
                <Svg box="0 0 26 26" className="size-[26px]"><path d="M1 6l5-5 7 7 7-7 5 5-7 7 7 7-5 5-7-7-7 7-5-5 7-7z" fill="#f9c6c8" stroke="#edb6b9" /></Svg>
            </button>

            <div className="absolute top-[444px] left-[643px] w-[105px] border border-[#444] bg-[#f4f4f4] text-[#222]">
                <div className="h-4 text-center leading-4">Face Set 1</div>
                <label className="flex h-4 items-center">
                    <span className="flex w-9 justify-between pr-[2px] pl-[3px]"><span>Radius</span><span>:</span></span>
                    <input defaultValue="90.00000000mm" className="h-4 w-0 flex-1 border-t border-l border-[#444] bg-white px-[2px] outline-none" />
                </label>
                <span className="absolute top-[14px] -left-[3px] size-[5px] rounded-full border border-[#555] bg-white" />
            </div>
            <div className="absolute top-[353px] left-[947px] h-[17px] w-[47px] border border-[#444] bg-[#f4f4f4] text-center leading-[15px] text-[#222]">
                Face Set 2
                <span className="absolute top-[5px] -left-[3px] size-[5px] rounded-full border border-[#555] bg-white" />
            </div>

            <div className="absolute top-[58px] right-0 flex w-[26px] flex-col border-t border-l border-[#888]">
                {taskTabs.map(([name, icon]) => (
                    <button key={name} aria-label={name} className={clsx("grid h-6 place-items-center border-b border-[#888]", name === "Appearances" ? "bg-white" : "bg-[#d2d2d2]")}>{icon}</button>
                ))}
            </div>
        </main>
    );
}

export default function App() {
    return (
        <div className="flex min-h-screen flex-col bg-black font-[Lato,sans-serif] text-[8px] leading-[10px] text-[#111]">
            <div className="h-[13px] shrink-0" />
            <TitleBar />
            <Ribbon />
            <div className="flex flex-1">
                <FilletPanel />
                <GraphicsArea />
            </div>
            <div className="flex h-[10px] shrink-0 items-stretch border-t border-[#999] bg-[#f5f5f5] pl-[18px] leading-[9px]">
                <div className="flex w-[43px] divide-x divide-[#999] bg-[#bdbdbd] text-[#8a8a8a]">
                    {["M1 0v6M5 0v6L2 3z", "M5 0v6L1 3z", "M1 0v6l4-3z", "M1 0v6l3-3zM5 0v6"].map((d, i) => (
                        <button key={d} aria-label={["First", "Previous", "Next", "Last"][i]} className="grid flex-1 place-items-center"><Svg box="0 0 6 6" className="size-[5px]"><path d={d} fill="currentColor" stroke="currentColor" strokeWidth=".8" /></Svg></button>
                    ))}
                </div>
                <button className="w-[38px] bg-white font-bold">Model</button>
                <button className="w-[46px] border-x border-[#999] bg-[#d5d5d5]">3D Views</button>
                <button className="w-[71px] border-r border-[#999] bg-[#d5d5d5] pr-1">Motion Study 1</button>
            </div>
            <footer className="flex h-[13px] shrink-0 items-center border-t border-[#999] bg-[#f5f5f5] pr-1 pl-px">
                Select a callout to modify parameters
                <span className="ml-auto flex h-full items-center border-x border-[#ccc] px-[6px]">Editing Part</span>
                <span className="ml-[30px] text-[#aaa]">MMGS</span>
                <Svg box="0 0 6 4" className="ml-3 h-[3px] w-1"><path d="M0 4h6L3 0z" fill="#666" /></Svg>
                <Svg className="ml-10 size-[11px]"><path d="M1 8l7-6 11 5-5 9-6 2z" fill="#ccc" stroke="#444" /><path d="M4 8l8 5M7 5l8 5M12 4l-6 8" stroke="#444" /></Svg>
            </footer>
            <div className="h-[13px] shrink-0" />
        </div>
    );
}
